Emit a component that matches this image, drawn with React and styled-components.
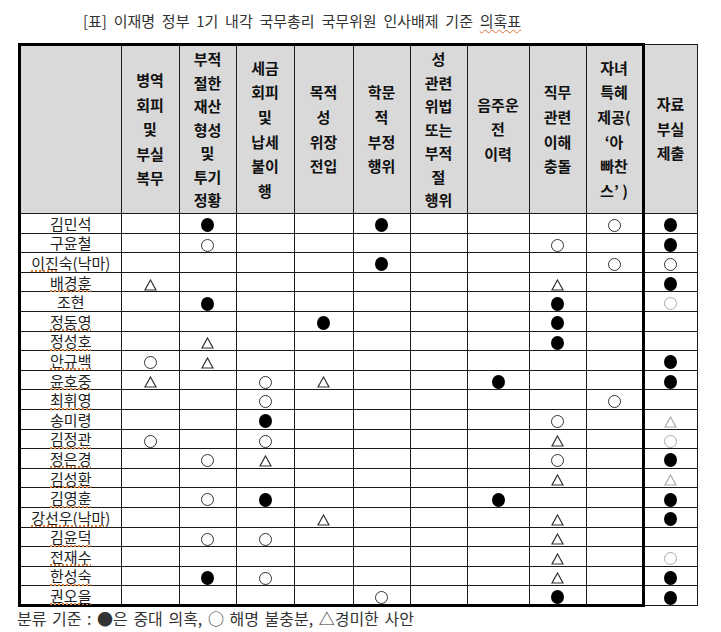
import React from 'react';
import styled, { createGlobalStyle, css } from 'styled-components';

const GlobalStyle = createGlobalStyle`
  html, body {
    margin: 0;
    padding: 0;
    background: #fff;
  }
  body {
    font-family: 'Noto Sans CJK KR', 'Noto Sans', sans-serif;
    color: #222;
  }
`;

const Page = styled.div`
  width: 721px;
  height: 632px;
  overflow: hidden;
  box-sizing: border-box;
  padding: 12px 0 0 18px;
`;

const Title = styled.h1`
  margin: 0 0 0 65px;
  height: 31px;
  font-size: 15px;
  font-weight: 400;
  line-height: 18px;
  color: #333;
  word-spacing: 3.4px;
`;

const Squiggle = styled.span`
  text-decoration: underline wavy #e0703a;
  text-decoration-thickness: 1px;
  text-underline-offset: 2px;
`;

const Grid = styled.table`
  border-collapse: collapse;
  table-layout: fixed;
  width: 679px;
`;

const edges = css`
  ${p => p.$left && css`border-left: 3px solid #000;`}
  ${p => p.$right && css`border-right: 3px solid #000;`}
  ${p => p.$top && css`border-top: 3px solid #000;`}
  ${p => p.$bottom && css`border-bottom: 3px solid #000;`}
`;

const HeadCell = styled.th`
  background: #d9d9d9;
  border: 1px solid #1a1a1a;
  padding: 0;
  height: 167px;
  ${edges}
`;

const HeadText = styled.div`
  height: 166px;
  overflow: hidden;
  display: flex;
  flex-direction: column;
  justify-content: center;
  align-items: center;
  font-size: 15px;
  font-weight: 700;
  line-height: ${p => (p.$dense ? '23.6px' : '24.6px')};
  color: #111;
  white-space: nowrap;
`;

const Row = styled.tr`
  height: 19.6px;
`;

const Cell = styled.td`
  border: 1px solid #1a1a1a;
  padding: 0;
  text-align: center;
  vertical-align: middle;
  line-height: 17px;
  font-size: 15px;
  color: #1e1e1e;
  ${edges}
`;

const Name = styled.span`
  ${p => p.$typo && css`
    text-decoration: underline dotted #e0803a;
    text-decoration-thickness: 1.5px;
    text-underline-offset: 2px;
  `}
`;

const Mark = styled.span`
  display: inline-block;
  vertical-align: middle;
  box-sizing: border-box;
  ${p => p.$kind === 'F' && css`
    width: 13px;
    height: 14px;
    border-radius: 50%;
    background: #000;
  `}
  ${p => p.$kind === 'O' && css`
    width: 13px;
    height: 13px;
    border-radius: 50%;
    border: 1.3px solid ${p.$light ? '#aaa' : '#333'};
  `}
`;

const Tri = styled.svg`
  display: inline-block;
  vertical-align: middle;
  width: 13px;
  height: 12px;
`;

const Legend = styled.p`
  margin: 2px 0 0 -1px;
  font-size: 16px;
  line-height: 18px;
  color: #333;
  word-spacing: 2px;
`;

const widths = [101.5, 58, 57, 58, 59, 57, 57, 62, 57, 57, 54];

const heads = [
  [],
  ['병역', '회피', '및', '부실', '복무'],
  ['부적', '절한', '재산', '형성', '및', '투기', '정황'],
  ['세금', '회피', '및', '납세', '불이', '행'],
  ['목적', '성', '위장', '전입'],
  ['학문', '적', '부정', '행위'],
  ['성', '관련', '위법', '또는', '부적', '절', '행위'],
  ['음주운', '전', '이력'],
  ['직무', '관련', '이해', '충돌'],
  ['자녀', '특혜', '제공(', '‘아', '빠찬', '스’ )'],
  ['자료', '부실', '제출'],
];

// F = 중대, O = 해명 불충분, T = 경미, lowercase = 흐리게
const rows = [
  ['김민석', 0, { 2: 'F', 5: 'F', 9: 'O', 10: 'F' }],
  ['구윤철', 0, { 2: 'O', 8: 'O', 10: 'F' }],
  ['이진숙(낙마)', 2, { 5: 'F', 9: 'O', 10: 'O' }],
  ['배경훈', 3, { 1: 'T', 8: 'T', 10: 'F' }],
  ['조현', 0, { 2: 'F', 8: 'F', 10: 'o' }],
  ['정동영', 3, { 4: 'F', 8: 'F' }],
  ['정성호', 3, { 2: 'T', 8: 'F' }],
  ['안규백', 3, { 1: 'O', 2: 'T', 10: 'F' }],
  ['윤호중', 3, { 1: 'T', 3: 'O', 4: 'T', 7: 'F', 10: 'F' }],
  ['최휘영', 3, { 3: 'O', 9: 'O' }],
  ['송미령', 0, { 3: 'F', 8: 'O', 10: 't' }],
  ['김정관', 3, { 1: 'O', 3: 'O', 8: 'T', 10: 'o' }],
  ['정은경', 3, { 2: 'O', 3: 'T', 8: 'O', 10: 'F' }],
  ['김성환', 3, { 8: 'T', 10: 't' }],
  ['김영훈', 3, { 2: 'O', 3: 'F', 7: 'F', 10: 'F' }],
  ['강선우(낙마)', 3, { 4: 'T', 8: 'T', 10: 'F' }],
  ['김윤덕', 3, { 2: 'O', 3: 'O', 8: 'T' }],
  ['전재수', 3, { 8: 'T', 10: 'o' }],
  ['한성숙', 3, { 2: 'F', 3: 'O', 8: 'T', 10: 'F' }],
  ['권오을', 3, { 5: 'O', 8: 'F', 10: 'F' }],
];

const Symbol = ({ code }) => {
  if (!code) return null;
  const light = code === code.toLowerCase();
  const kind = code.toUpperCase();
  if (kind === 'T') {
    return (
      <Tri viewBox="0 0 13 12">
        <polygon points="6.5,1 12,11 1,11" fill="none" stroke={light ? '#aaa' : '#333'} strokeWidth="1.2" />
      </Tri>
    );
  }
  return <Mark $kind={kind} $light={light} />;
};

const NameCell = ({ name, typo, ...rest }) => (
  <Cell {...rest}>
    <Name $typo={typo > 0}>{name.slice(0, typo)}</Name>
    {name.slice(typo)}
  </Cell>
);

export default function App() {
  const last = rows.length - 1;
  return (
    <Page>
      <GlobalStyle />
      <Title>
        [표] 이재명 정부 1기 내각 국무총리 국무위원 인사배제 기준 <Squiggle>의혹표</Squiggle>
      </Title>
      <Grid>
        <colgroup>
          {widths.map((w, i) => <col key={i} style={{ width: w }} />)}
        </colgroup>
        <thead>
          <tr>
            {heads.map((lines, i) => (
              <HeadCell key={i} $left={i === 0} $right={i === 9} $top={i < 10}>
                <HeadText $dense={lines.length > 6}>
                  {lines.map(l => <span key={l}>{l}</span>)}
                </HeadText>
              </HeadCell>
            ))}
          </tr>
        </thead>
        <tbody>
          {rows.map(([name, typo, marks], r) => (
            <Row key={name}>
              <NameCell name={name} typo={typo === 3 ? name.length : typo} $left $bottom={r === last} />
              {Array.from({ length: 10 }, (_, c) => (
                <Cell key={c} $right={c === 8} $bottom={r === last && c < 9}>
                  <Symbol code={marks[c + 1]} />
                </Cell>
              ))}
            </Row>
          ))}
        </tbody>
      </Grid>
      <Legend>분류 기준 : ●은 중대 의혹, ○ 해명 불충분, △경미한 사안</Legend>
    </Page>
  );
}
